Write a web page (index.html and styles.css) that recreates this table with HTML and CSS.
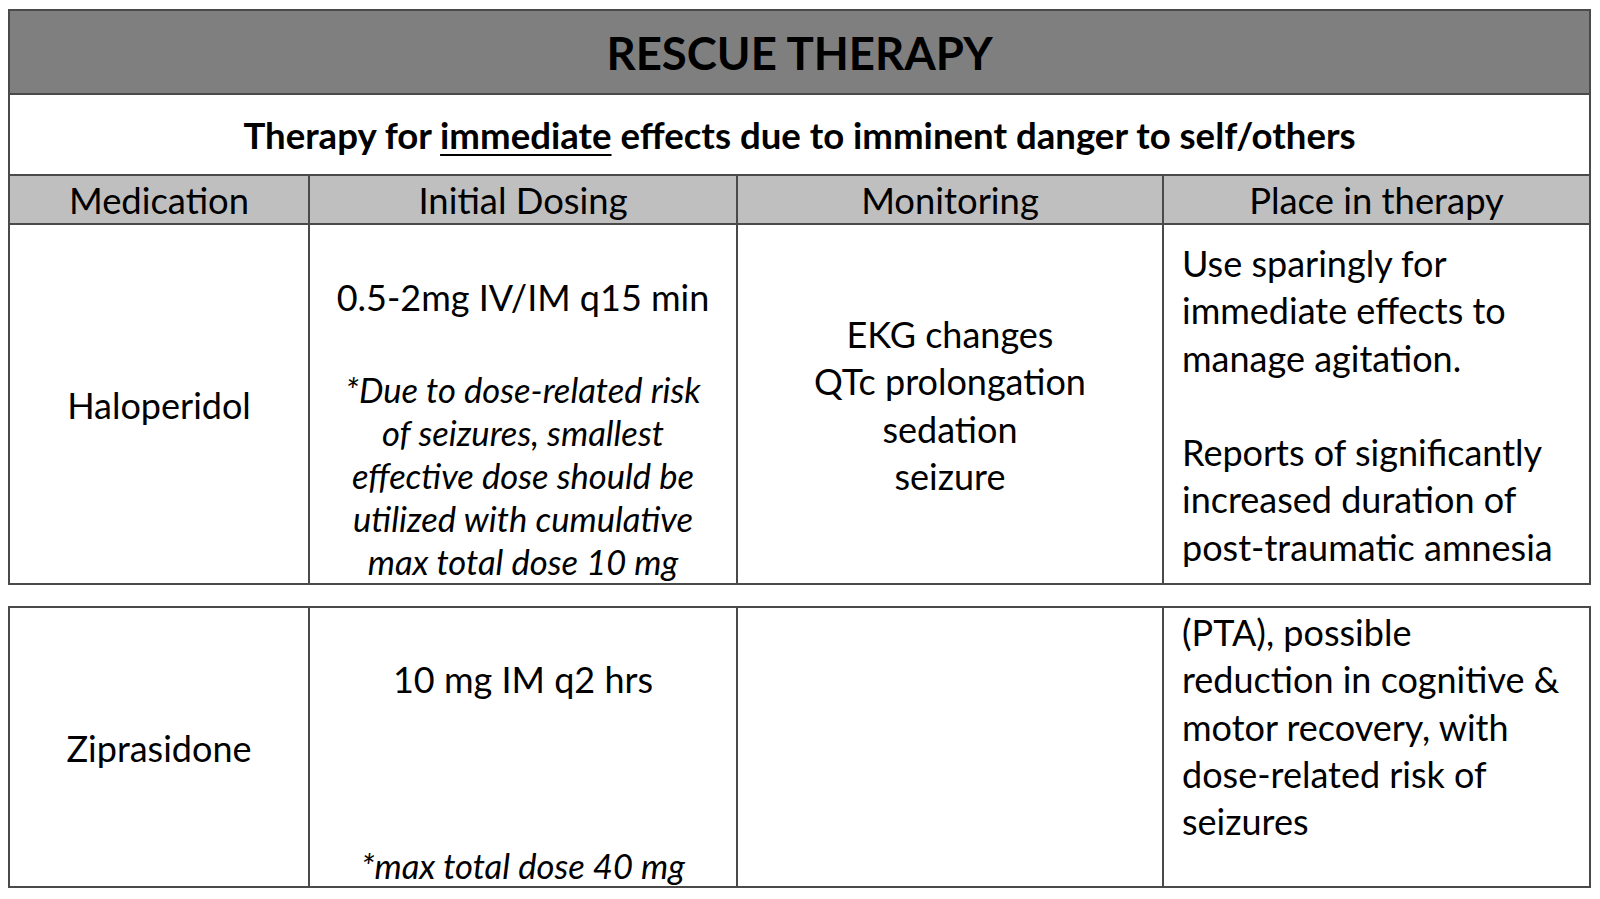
FILE: index.html
```html
<!DOCTYPE html>
<html lang="en">
<head>
<meta charset="utf-8">
<title>Rescue Therapy</title>
<link rel="stylesheet" href="styles.css">
</head>
<body>
<main class="page">
  <table class="sheet">
    <colgroup>
      <col class="c1"><col class="c2"><col class="c3"><col class="c4">
    </colgroup>
    <tr class="title-row"><th colspan="4" class="title">RESCUE THERAPY</th></tr>
    <tr class="sub-row"><th colspan="4" class="sub">Therapy for <u>immediate</u> effects due to imminent danger to self/others</th></tr>
    <tr class="head-row">
      <th class="head">Medication</th>
      <th class="head">Initial Dosing</th>
      <th class="head">Monitoring</th>
      <th class="head">Place in therapy</th>
    </tr>
    <tr class="row1">
      <td class="med">Haloperidol</td>
      <td class="dose dose1">
        <div class="dose-main">0.5-2mg IV/IM q15 min</div>
        <div class="note note1">*Due to dose-related risk<br>of seizures, smallest<br>effective dose should be<br>utilized with cumulative<br>max total dose 10 mg</div>
      </td>
      <td class="mon">EKG changes<br>QTc prolongation<br>sedation<br>seizure</td>
      <td class="place place1">Use sparingly for<br>immediate effects to<br>manage agitation.<br><br>Reports of significantly<br>increased duration of<br>post-traumatic amnesia</td>
    </tr>
  </table>

  <table class="sheet sheet2">
    <colgroup>
      <col class="c1"><col class="c2"><col class="c3"><col class="c4">
    </colgroup>
    <tr class="row2">
      <td class="med">Ziprasidone</td>
      <td class="dose dose2">
        <div class="dose-main">10 mg IM q2 hrs</div>
        <div class="note note2">*max total dose 40 mg</div>
      </td>
      <td class="mon"></td>
      <td class="place place2">(PTA), possible<br>reduction in cognitive &amp;<br>motor recovery, with<br>dose-related risk of<br>seizures</td>
    </tr>
  </table>
</main>
</body>
</html>
```

FILE: styles.css
```css
html, body {
  margin: 0;
  padding: 0;
  background: #ffffff;
}

body {
  font-family: Lato, "Open Sans", "Liberation Sans", sans-serif;
  color: #000000;
}

.page {
  padding: 9px 0 0 8px;
  width: 1581px;
}

.sheet {
  width: 1581px;
  border-collapse: collapse;
  table-layout: fixed;
}

.sheet2 {
  margin-top: 21px;
}

.c1 { width: 300px; }
.c2 { width: 428px; }
.c3 { width: 426px; }
.c4 { width: 427px; }

th, td {
  border: 2px solid #4a4a4a;
  padding: 0;
}

.title {
  height: 80px;
  background: #7f7f7f;
  font-size: 45.5px;
  font-weight: 700;
  text-align: center;
  vertical-align: middle;
  line-height: 80px;
  padding-top: 2px;
}

.sub {
  height: 77px;
  padding-top: 2px;
  background: #ffffff;
  font-size: 36.6px;
  font-weight: 700;
  text-align: center;
  vertical-align: middle;
  line-height: 47px;
}

.sub u {
  text-decoration-thickness: 2px;
  text-underline-offset: 5px;
}

.head {
  height: 45px;
  padding-top: 2px;
  background: #bfbfbf;
  font-size: 36.4px;
  font-weight: 400;
  text-align: center;
  vertical-align: middle;
  line-height: 45px;
}

td {
  font-size: 36px;
  line-height: 47.3px;
  vertical-align: middle;
}

.row1 td { height: 358px; }
.row2 td { height: 277px; }

.row1 .med,
.row1 .mon,
.row1 .place1,
.row2 .med {
  padding-top: 3px;
}

.row1 .med,
.row1 .mon,
.row1 .place1 { height: 355px; }
.row2 .med { height: 274px; }

.med {
  text-align: center;
}

.dose {
  text-align: center;
  vertical-align: top;
}

.dose1 .dose-main { padding-top: 49px; }
.dose2 .dose-main { padding-top: 48px; }

.note {
  font-style: italic;
  font-size: 34.6px;
  line-height: 42.9px;
}

.note1 { margin-top: 48px; margin-bottom: -3px; }
.note2 { margin-top: 142px; margin-bottom: -5px; }

.mon {
  text-align: center;
}

.place {
  text-align: left;
  padding-left: 18px;
}

.place2 {
  vertical-align: top;
  padding-top: 1px;
}
```
